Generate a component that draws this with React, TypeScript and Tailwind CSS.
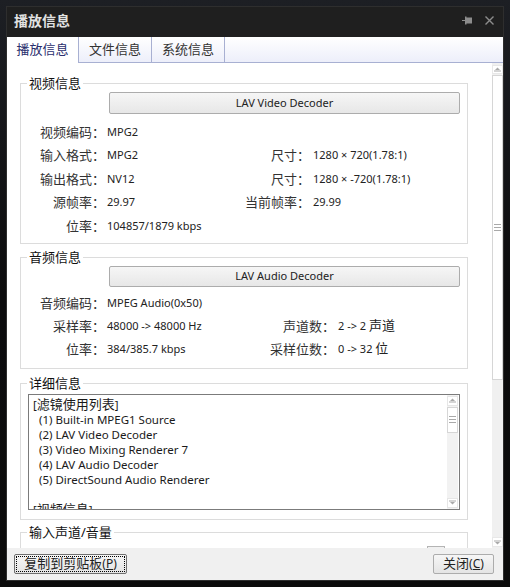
import React from "react";

const F = "font-['Noto_Sans','Noto_Sans_CJK_SC',sans-serif]";

const CJK_RE = /([\u2e80-\u9fff\u3000-\u303f\uff00-\uffef]+)/;

function M({ s }: { s: string }) {
  const parts = s.split(CJK_RE);
  return (
    <>
      {parts.map((p, i) =>
        i % 2 === 1 ? (
          <span key={i} className="text-[13px]">
            {p}
          </span>
        ) : p ? (
          <React.Fragment key={i}>{p}</React.Fragment>
        ) : null
      )}
    </>
  );
}

function Legend({ t }: { t: string }) {
  return (
    <span className="absolute left-[6px] top-[-10px] h-[18px] bg-white px-[2px] text-[13px] leading-[18px] text-[#111]">
      {t}
    </span>
  );
}

function DecoderButton({ t, h }: { t: string; h: string }) {
  return (
    <div
      className={`ml-[88px] flex ${h} w-[351px] items-center justify-center rounded-[2px] border border-[#acacac] bg-linear-to-b from-[#f6f6f6] to-[#e7e7e7] text-[11px] text-[#222]`}
    >
      {t}
    </div>
  );
}

type RowProps = { l1: string; v1: string; l2?: string; v2?: string; h: string; w1: string };

function Row({ l1, v1, l2, v2, h, w1 }: RowProps) {
  return (
    <div className={`flex items-center ${h} text-[11px] leading-[16px]`}>
      <span className="w-[84px] shrink-0 text-right text-[13px] text-[#333]">{l1}</span>
      <span className={`ml-[2px] ${w1} shrink-0 text-[#222]`}>
        <M s={v1} />
      </span>
      {l2 ? <span className="w-[65px] shrink-0 text-right text-[13px] text-[#333]">{l2}</span> : null}
      {v2 ? (
        <span className="ml-[3px] text-[#222]">
          <M s={v2} />
        </span>
      ) : null}
    </div>
  );
}

function ArrowUp() {
  return (
    <svg width="7" height="5" viewBox="0 0 7 5">
      <path d="M3.5 0.5 L6 3 H1 Z" fill="#a9a9a9" />
      <rect x="0" y="3.5" width="7" height="1" fill="#a9a9a9" />
    </svg>
  );
}

function ArrowDown() {
  return (
    <svg width="7" height="5" viewBox="0 0 7 5">
      <rect x="0" y="0.5" width="7" height="1" fill="#a9a9a9" />
      <path d="M1 2 H6 L3.5 4.5 Z" fill="#a9a9a9" />
    </svg>
  );
}

function Grip() {
  return (
    <svg width="7" height="7" viewBox="0 0 7 7">
      <rect x="0" y="0" width="7" height="1" fill="#a9a9a9" />
      <rect x="0" y="3" width="7" height="1" fill="#a9a9a9" />
      <rect x="0" y="6" width="7" height="1" fill="#a9a9a9" />
    </svg>
  );
}

const filterLines = [
  "[滤镜使用列表]",
  "  (1) Built-in MPEG1 Source",
  "  (2) LAV Video Decoder",
  "  (3) Video Mixing Renderer 7",
  "  (4) LAV Audio Decoder",
  "  (5) DirectSound Audio Renderer",
  " ",
  "[视频信息]",
];

export default function App() {
  return (
    <div className={`h-[587px] w-[510px] bg-linear-to-b from-[#1d1f24] via-[#0c0c0d] to-[#0b0b0b] p-[7px] ${F}`}>
      <div className="flex h-full flex-col bg-white ring-1 ring-[#2e2e2e]">
        {/* title bar */}
        <div className="flex h-[30px] shrink-0 items-center justify-between bg-[#1f1f1f] pb-[3px] pl-[7px] pr-[9px]">
          <span className="text-[14px] font-bold leading-[18px] text-[#e2e2e2]">播放信息</span>
          <div className="flex items-center gap-[12px]">
            <svg width="11" height="9" viewBox="0 0 11 9">
              <rect x="0" y="4" width="4" height="1" fill="#8c8c8c" />
              <rect x="3" y="0.5" width="1.5" height="8" fill="#8c8c8c" />
              <rect x="4" y="1.5" width="6" height="6" fill="#8c8c8c" />
            </svg>
            <svg width="9" height="9" viewBox="0 0 9 9">
              <path d="M0.5 0.5 L8.5 8.5 M8.5 0.5 L0.5 8.5" stroke="#8c8c8c" strokeWidth="1.4" />
            </svg>
          </div>
        </div>

        {/* tabs */}
        <div className="flex h-[26px] shrink-0 bg-linear-to-b from-[#ffffff] to-[#eceefa] text-[13px]">
          <div className="flex w-[72px] items-center justify-center border-r border-[#a8b0d2] bg-white text-[#2a2f6e]">
            播放信息
          </div>
          <div className="flex w-[73px] items-center justify-center border-b border-r border-[#a8b0d2] text-[#333]">
            文件信息
          </div>
          <div className="flex w-[73px] items-center justify-center border-b border-r border-[#a8b0d2] text-[#333]">
            系统信息
          </div>
          <div className="flex-1 border-b border-[#a8b0d2]" />
        </div>

        {/* content */}
        <div className="flex min-h-0 flex-1">
          <div className="min-w-0 flex-1 overflow-hidden pt-[20px]">
            {/* 视频信息 */}
            <div className="relative ml-[13px] w-[448px] border border-[#dcdcdc] pb-[5px] pt-[8px]">
              <Legend t="视频信息" />
              <DecoderButton t="LAV Video Decoder" h="h-[22px]" />
              <div className="mt-[6px]">
                <Row h="h-[23.5px]" w1="w-[138px]" l1="视频编码：" v1="MPG2" />
                <Row h="h-[23.5px]" w1="w-[138px]" l1="输入格式：" v1="MPG2" l2="尺寸：" v2="1280 × 720(1.78:1)" />
                <Row h="h-[23.5px]" w1="w-[138px]" l1="输出格式：" v1="NV12" l2="尺寸：" v2="1280 × -720(1.78:1)" />
                <Row h="h-[23.5px]" w1="w-[138px]" l1="源帧率：" v1="29.97" l2="当前帧率：" v2="29.99" />
                <Row h="h-[23.5px]" w1="w-[138px]" l1="位率：" v1="104857/1879 kbps" />
              </div>
            </div>

            {/* 音频信息 */}
            <div className="relative ml-[13px] mt-[13px] w-[448px] border border-[#dcdcdc] pb-[7.5px] pt-[8px]">
              <Legend t="音频信息" />
              <DecoderButton t="LAV Audio Decoder" h="h-[21px]" />
              <div className="mt-[4.5px]">
                <Row h="h-[23px]" w1="w-[163px]" l1="音频编码：" v1="MPEG Audio(0x50)" />
                <Row h="h-[23px]" w1="w-[163px]" l1="采样率：" v1="48000 -> 48000 Hz" l2="声道数：" v2="2 -> 2 声道" />
                <Row h="h-[23px]" w1="w-[163px]" l1="位率：" v1="384/385.7 kbps" l2="采样位数：" v2="0 -> 32 位" />
              </div>
            </div>

            {/* 详细信息 */}
            <div className="relative ml-[13px] mt-[14px] w-[448px] border border-[#dcdcdc] pb-[9px] pt-[10px]">
              <Legend t="详细信息" />
              <div className="ml-[7px] flex h-[116px] w-[432px] border border-[#7b7b7b] bg-white">
                <div className="min-w-0 flex-1 overflow-hidden pl-[4px] pt-[2px] text-[11.5px] leading-[15px] text-[#1a1a1a]">
                  {filterLines.map((l, i) => (
                    <div key={i} className="h-[15px] whitespace-pre">
                      <M s={l} />
                    </div>
                  ))}
                </div>
                <div className="mr-[1px] flex w-[11px] shrink-0 flex-col bg-[#f2f2f2] py-[1px]">
                  <div className="flex h-[10px] items-center justify-center border border-[#e6e6e6] bg-white">
                    <ArrowUp />
                  </div>
                  <div className="mt-[1px] flex h-[26px] items-center justify-center border border-[#d6d6d6] bg-white">
                    <Grip />
                  </div>
                  <div className="flex-1" />
                  <div className="flex h-[10px] items-center justify-center border border-[#e6e6e6] bg-white">
                    <ArrowDown />
                  </div>
                </div>
              </div>
            </div>

            {/* 输入声道/音量 */}
            <div className="relative ml-[13px] mt-[12px] h-[60px] w-[448px] border border-[#dcdcdc]">
              <Legend t="输入声道/音量" />
              <div className="flex justify-end pr-[22px] pt-[13px]">
                <div className="h-[10px] w-[18px] border border-[#b4b4b4] bg-[#f0f0f0]" />
              </div>
            </div>
          </div>

          {/* outer scrollbar */}
          <div className="flex w-[11px] shrink-0 flex-col bg-[#f0f0f0] pb-[1px] pt-[2px]">
            <div className="flex h-[9px] items-center justify-center border border-[#e8e8e8] bg-white">
              <ArrowUp />
            </div>
            <div className="mt-[1px] flex h-[305px] items-center justify-center border border-[#d6d6d6] bg-white">
              <Grip />
            </div>
            <div className="flex-1" />
            <div className="flex h-[10px] items-center justify-center border border-[#e8e8e8] bg-white">
              <ArrowDown />
            </div>
          </div>
        </div>

        {/* bottom bar */}
        <div className="flex h-[32px] shrink-0 items-center justify-between bg-[#f0f0f0] pl-[7px] pr-[9px] text-[12px] text-[#222]">
          <div className="flex h-[20px] w-[113px] items-center justify-center rounded-[2px] border border-[#6f6f6f] bg-linear-to-b from-[#f6f6f6] to-[#e4e4e4] outline-1 outline-offset-[-3px] outline-black outline-dotted">
            <span>
              <span className="text-[13px]">复制到剪贴板</span>(<span className="underline">P</span>)
            </span>
          </div>
          <div className="flex h-[20px] w-[61px] items-center justify-center rounded-[2px] border border-[#acacac] bg-linear-to-b from-[#f6f6f6] to-[#e4e4e4]">
            <span>
              <span className="text-[13px]">关闭</span>(<span className="underline">C</span>)
            </span>
          </div>
        </div>
      </div>
    </div>
  );
}
